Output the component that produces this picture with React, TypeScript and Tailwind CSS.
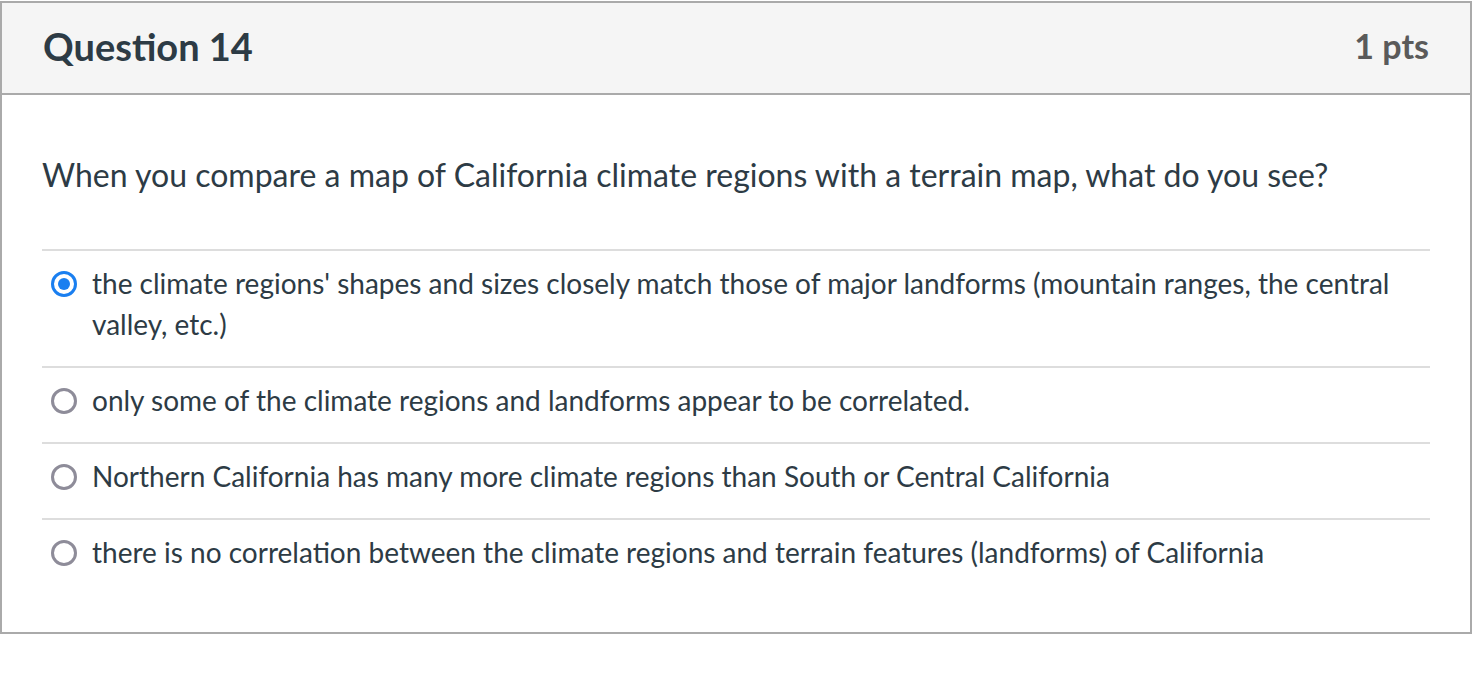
import React from "react";

const answers = [
  {
    text: "the climate regions' shapes and sizes closely match those of major landforms (mountain ranges, the central valley, etc.)",
    checked: true,
  },
  { text: "only some of the climate regions and landforms appear to be correlated.", checked: false },
  { text: "Northern California has many more climate regions than South or Central California", checked: false },
  {
    text: "there is no correlation between the climate regions and terrain features (landforms) of California",
    checked: false,
  },
];

const Radio: React.FC<{ checked: boolean }> = ({ checked }) =>
  checked ? (
    <span className="mt-[8px] flex h-[26px] w-[26px] shrink-0 items-center justify-center rounded-full border-[3px] border-[#1a7ff0] bg-white">
      <span className="h-[12px] w-[12px] rounded-full bg-[#1a7ff0]" />
    </span>
  ) : (
    <span className="mt-[8px] h-[26px] w-[26px] shrink-0 rounded-full border-[3px] border-[#8e8c99] bg-white" />
  );

export default function App() {
  return (
    <div className="bg-white pt-px font-['Lato','Open_Sans',sans-serif] text-[#2d3b45]">
      <div className="border-2 border-[#aaaaaa]">
        <div className="flex h-[92px] items-center justify-between border-b-2 border-[#aaaaaa] bg-[#f5f5f5] px-[41px] pb-[4px]">
          <h2 className="text-[38px] font-bold leading-none">Question 14</h2>
          <span className="text-[34px] font-bold leading-none text-[#5a5a5a]">1 pts</span>
        </div>
        <div className="px-[40px] pb-[38px] pt-[60px]">
          <p className="text-[32px] leading-[40px]">
            When you compare a map of California climate regions with a terrain map, what do you see?
          </p>
          <div className="mt-[54px]">
            {answers.map((a, i) => (
              <label
                key={i}
                className="flex gap-[15px] border-t-2 border-[#dddddd] pb-[21px] pl-[9px] pt-[12px] text-[28px] leading-[41px]"
              >
                <Radio checked={a.checked} />
                <span>{a.text}</span>
              </label>
            ))}
          </div>
        </div>
      </div>
    </div>
  );
}
